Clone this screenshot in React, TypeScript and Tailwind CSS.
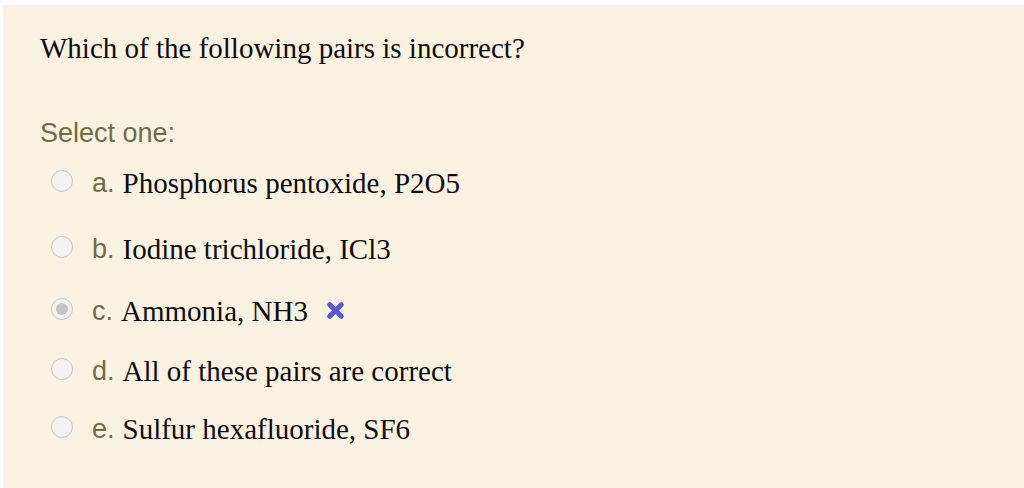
import React from 'react';

interface Option {
    letter: string;
    text: string;
    rowHeight: string;
    checked?: boolean;
    wrong?: boolean;
}

const options: Option[] = [
    { letter: 'a.', text: 'Phosphorus pentoxide, P2O5', rowHeight: 'h-[66px]' },
    { letter: 'b.', text: 'Iodine trichloride, ICl3', rowHeight: 'h-[62px]' },
    { letter: 'c.', text: 'Ammonia, NH3', rowHeight: 'h-[60px]', checked: true, wrong: true },
    { letter: 'd.', text: 'All of these pairs are correct', rowHeight: 'h-[58px]' },
    { letter: 'e.', text: 'Sulfur hexafluoride, SF6', rowHeight: 'h-[34px]' },
];

const Radio = ({ checked }: { checked?: boolean }) => (
    <span className="mt-[4px] flex h-[22px] w-[22px] shrink-0 items-center justify-center rounded-full border border-[#c9c7c2] bg-[#f3f2f0]">
        {checked && <span className="h-[12px] w-[12px] rounded-full bg-[#c4c3c1]" />}
    </span>
);

const WrongMark = () => (
    <svg viewBox="0 0 20 20" className="ml-[17px] mt-[6px] h-[21px] w-[21px]">
        <path d="M4.5 4.5 L15.5 15.5 M15.5 4.5 L4.5 15.5" stroke="#5757d8" strokeWidth="4.8" strokeLinecap="round" fill="none" />
    </svg>
);

const App = () => {
    return (
        <div className="h-[488px] w-full bg-white pl-[3px] pt-[5px]">
            <div className="h-full w-full bg-[#faf2e1] pl-[37px] pt-[26px]">
                <p className="font-['Liberation_Serif',serif] text-[29px] leading-[34px] text-[#0d0d0d]">
                    Which of the following pairs is incorrect?
                </p>
                <p className="mt-[52px] font-['Liberation_Sans',sans-serif] text-[27px] leading-[32px] text-[#746a45]">
                    Select one:
                </p>
                <div className="mt-[17px] flex flex-col">
                    {options.map(o => (
                        <div key={o.letter} className={`flex items-start pl-[11px] ${o.rowHeight}`}>
                            <Radio checked={o.checked} />
                            <span className="ml-[19px] font-['Liberation_Sans',sans-serif] text-[27px] leading-[34px] text-[#746a45]">
                                {o.letter}
                            </span>
                            <span className="ml-[8px] font-['Liberation_Serif',serif] text-[29px] leading-[34px] text-[#0d0d0d]">
                                {o.text}
                            </span>
                            {o.wrong && <WrongMark />}
                        </div>
                    ))}
                </div>
            </div>
        </div>
    );
};

export default App;
